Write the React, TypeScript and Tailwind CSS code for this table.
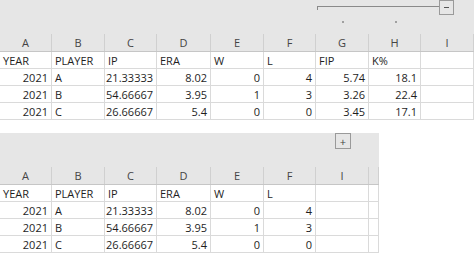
const widths = [52, 53, 52, 54, 53, 52, 53, 52, 53];

const topHead = ["A", "B", "C", "D", "E", "F", "G", "H", "I"];
const topRows: (string | number)[][] = [
  ["YEAR", "PLAYER", "IP", "ERA", "W", "L", "FIP", "K%", ""],
  [2021, "A", 21.33333, 8.02, 0, 4, 5.74, 18.1, ""],
  [2021, "B", 54.66667, 3.95, 1, 3, 3.26, 22.4, ""],
  [2021, "C", 26.66667, 5.4, 0, 0, 3.45, 17.1, ""],
];

const bottomHead = ["A", "B", "C", "D", "E", "F", "I", ""];
const bottomWidths = [52, 53, 52, 54, 53, 52, 53, 10];
const bottomRows: (string | number)[][] = [
  ["YEAR", "PLAYER", "IP", "ERA", "W", "L", "", ""],
  [2021, "A", 21.33333, 8.02, 0, 4, "", ""],
  [2021, "B", 54.66667, 3.95, 1, 3, "", ""],
  [2021, "C", 26.66667, 5.4, 0, 0, "", ""],
];

function HeaderRow({ labels, cols }: { labels: string[]; cols: number[] }) {
  return (
    <div className="mt-auto flex h-[18px] border-b border-[#c6c6c6]">
      {labels.map((l, i) => (
        <div
          key={i}
          style={{ width: cols[i] }}
          className="flex shrink-0 items-center justify-center border-r border-[#d0d0d0] text-[11px] leading-none text-[#444]"
        >
          {l}
        </div>
      ))}
    </div>
  );
}

function DataRows({ rows, cols }: { rows: (string | number)[][]; cols: number[] }) {
  return (
    <>
      {rows.map((r, ri) => (
        <div key={ri} className="flex h-[17px] border-b border-[#dadada]">
          {r.map((v, i) => (
            <div
              key={i}
              style={{ width: cols[i] }}
              className={
                "flex shrink-0 items-center overflow-hidden whitespace-nowrap border-r border-[#dadada] px-[3px] text-[11px] leading-none text-[#1e1e1e] " +
                (typeof v === "number" ? "justify-end" : "justify-start")
              }
            >
              {v}
            </div>
          ))}
        </div>
      ))}
    </>
  );
}

export default function App() {
  return (
    <div
      className="h-[258px] w-[474px] overflow-hidden bg-white"
      style={{ fontFamily: '"Open Sans", "Noto Sans", sans-serif' }}
    >
      {/* first sheet, grouped columns expanded */}
      <div className="flex h-[52px] flex-col bg-[#e6e6e6]">
        <div className="flex pl-[317px]">
          <div className="mt-[6px] h-[4px] w-[122px] border-l border-t border-[#8a8a8a]" />
          <div className="flex h-[15px] w-[15px] items-center justify-center border border-[#9a9a9a]">
            <div className="h-px w-[5px] bg-[#555]" />
          </div>
        </div>
        <div className="mt-[6px] flex gap-[51px] pl-[342px]">
          <div className="h-[2px] w-[2px] bg-[#a0a0a0]" />
          <div className="h-[2px] w-[2px] bg-[#a0a0a0]" />
        </div>
        <HeaderRow labels={topHead} cols={widths} />
      </div>
      <DataRows rows={topRows} cols={widths} />

      {/* second sheet, grouped columns collapsed */}
      <div className="mt-[13px] w-[379px]">
        <div className="flex h-[52px] flex-col bg-[#e6e6e6]">
          <div className="pl-[335px]">
            <div className="flex h-[16px] w-[16px] items-center justify-center border border-[#9a9a9a] text-[11px] leading-none text-[#444]">
              +
            </div>
          </div>
          <HeaderRow labels={bottomHead} cols={bottomWidths} />
        </div>
        <DataRows rows={bottomRows} cols={bottomWidths} />
      </div>
    </div>
  );
}
